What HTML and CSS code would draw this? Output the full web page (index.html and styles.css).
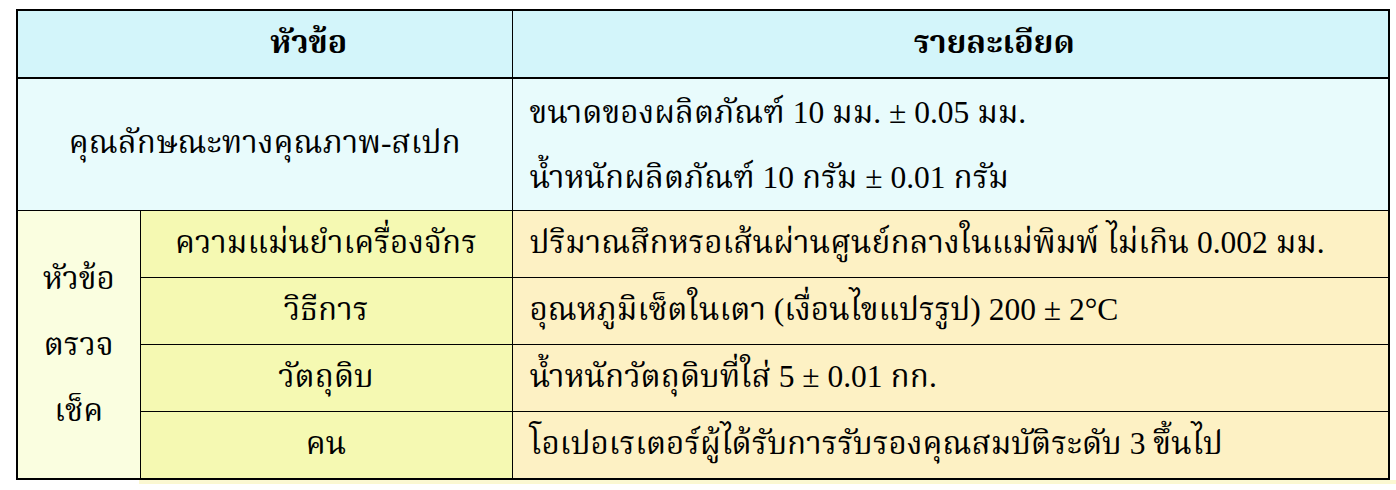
FILE: index.html
```html
<!DOCTYPE html>
<html lang="th">
<head>
<meta charset="utf-8">
<link rel="stylesheet" href="styles.css">
</head>
<body>
<table class="spec">
  <colgroup>
    <col class="c1"><col class="c2"><col class="c3">
  </colgroup>
  <tr class="head">
    <th colspan="2" class="h-topic">หัวข้อ</th>
    <th class="h-detail">รายละเอียด</th>
  </tr>
  <tr class="quality">
    <td colspan="2" class="q-title">คุณลักษณะทางคุณภาพ-สเปก</td>
    <td class="q-detail">
      <div class="line">ขนาดของผลิตภัณฑ์ 10 มม. ± 0.05 มม.</div>
      <div class="line">น้ำหนักผลิตภัณฑ์ 10 กรัม ± 0.01 กรัม</div>
    </td>
  </tr>
  <tr class="check">
    <td rowspan="4" class="check-title"><div>หัวข้อ</div><div>ตรวจ</div><div>เช็ค</div></td>
    <td class="item">ความแม่นยำเครื่องจักร</td>
    <td class="desc">ปริมาณสึกหรอเส้นผ่านศูนย์กลางในแม่พิมพ์ ไม่เกิน 0.002 มม.</td>
  </tr>
  <tr class="check">
    <td class="item">วิธีการ</td>
    <td class="desc">อุณหภูมิเซ็ตในเตา (เงื่อนไขแปรรูป) 200 ± 2°C</td>
  </tr>
  <tr class="check">
    <td class="item">วัตถุดิบ</td>
    <td class="desc">น้ำหนักวัตถุดิบที่ใส่ 5 ± 0.01 กก.</td>
  </tr>
  <tr class="check">
    <td class="item">คน</td>
    <td class="desc">โอเปอเรเตอร์ผู้ได้รับการรับรองคุณสมบัติระดับ 3 ขึ้นไป</td>
  </tr>
</table>
<div class="shadow"></div>
</body>
</html>
```
FILE: styles.css
```css
html, body {
  margin: 0;
  padding: 0;
  background: #ffffff;
}
body {
  padding: 9px 0 0 16px;
  font-family: "Liberation Serif", "Noto Serif Thai", "Noto Sans Thai", serif;
  color: #000;
}
.spec {
  border-collapse: collapse;
  width: 1372px;
  table-layout: fixed;
  border: 2px solid #000;
}
.c1 { width: 123px; }
.c2 { width: 372px; }
.c3 { width: 877px; }
.spec th, .spec td {
  border: 1.5px solid #000;
  padding: 0;
  font-size: 31.5px;
  font-weight: normal;
  vertical-align: middle;
}
.head th {
  height: 66px;
  background: #d3f5fa;
  font-weight: bold;
  font-size: 32px;
  text-align: center;
  border-bottom: 2.5px solid #000;
  padding-left: 88px;
}
.quality td {
  height: 131px;
  background: #e8fbfc;
}
.q-title { text-align: center; }
.q-detail { padding-left: 17px !important; }
.q-detail .line { line-height: 65px; }
.check td { height: 66px; }
.check-title {
  background: #fafee0;
  text-align: center;
}
.check-title div { line-height: 66px; }
.item {
  background: #f5f9b2;
  text-align: center;
}
.desc {
  background: #fdf1c4;
  padding-left: 17px !important;
}
.shadow {
  margin-left: 123px;
  width: 1257px;
  height: 4px;
  background: #fbf8d2;
}
```
